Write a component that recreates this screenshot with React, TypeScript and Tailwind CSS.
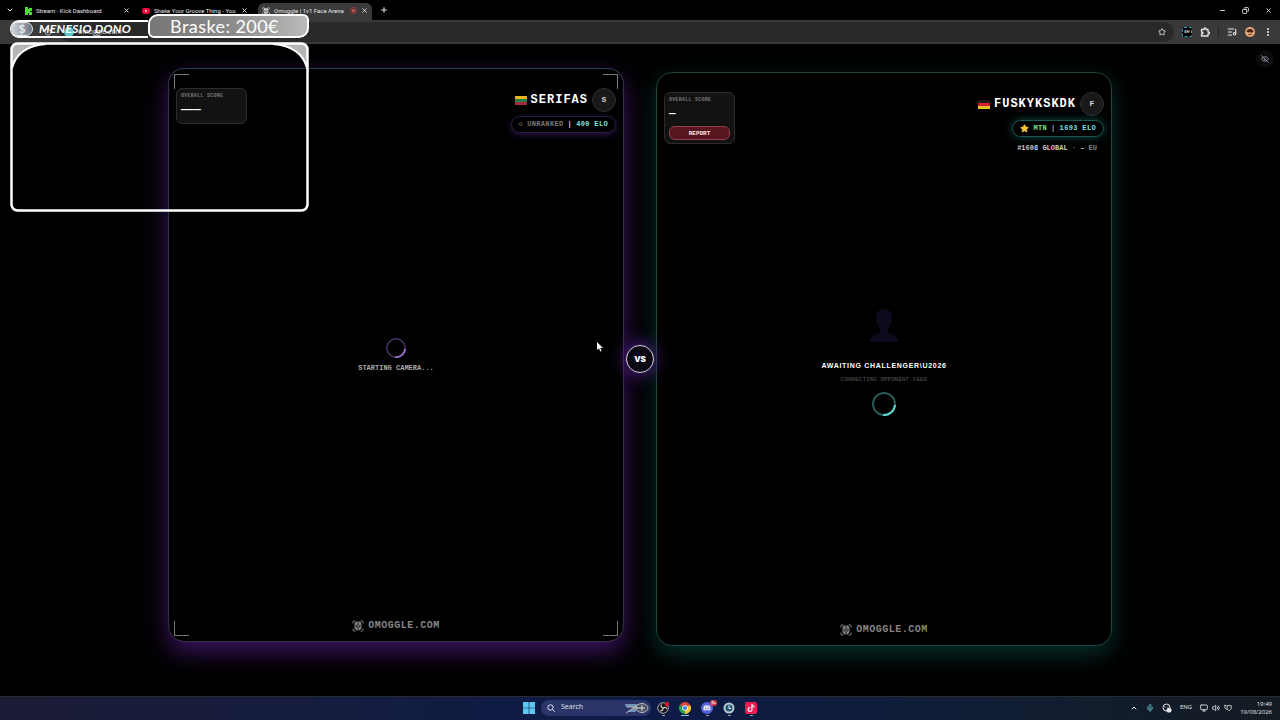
import { ReactNode } from "react";
import {
  ChevronDown,
  ChevronUp,
  Copy,
  EllipsisVertical,
  EyeOff,
  ListMusic,
  Mic,
  Minus,
  Monitor,
  Plus,
  RotateCw,
  Star,
  Volume2,
  X,
} from "lucide-react";
import { FaDiscord, FaTiktok } from "react-icons/fa";

interface TabProps {
  title: string;
  icon: ReactNode;
  active?: boolean;
}

interface PlayerHeaderProps {
  score: string;
  name: string;
  flag: string[];
  reportable?: boolean;
  children: ReactNode;
}

const FaceLogo = ({ className }: { className: string }) => (
  <svg viewBox="0 0 24 24" fill="none" stroke="currentColor" className={className}>
    <path
      d="M2 7V4q0-2 2-2h3M17 2h3q2 0 2 2v3M22 17v3q0 2-2 2h-3M7 22H4q-2 0-2-2v-3"
      strokeWidth="2"
    />
    <path
      d="M11 3C6 3 5 7 5 12s2 8 6 9zM13 3c5 0 6 4 6 9s-2 8-6 9z"
      fill="currentColor"
      strokeWidth="0.5"
    />
    <path d="M8 9v5h2M16 9v5h-2" stroke="#000" strokeWidth="1.5" />
  </svg>
);

const Tab = ({ title, icon, active }: TabProps) => (
  <div
    className={
      active
        ? "ml-0.5 flex h-[17px] w-[114px] items-center gap-1 self-end rounded-t-md bg-[#3a3a3a] pb-0.5 pl-1 pr-1"
        : "flex h-[17px] w-[118px] items-center gap-1 self-end pb-0.5 pl-1 pr-2"
    }
  >
    {icon}
    <span className="flex-1 whitespace-nowrap font-['Roboto',sans-serif] text-[6px]">{title}</span>
    {active && (
      <span className="flex size-[7px] items-center justify-center rounded-full border border-[#a33b3b]">
        <span className="size-[3px] rounded-full bg-[#e05555]" />
      </span>
    )}
    <button type="button" aria-label={`Close ${title}`}>
      <X className="size-[7px]" strokeWidth={3} />
    </button>
  </div>
);

const BrowserChrome = () => (
  <header className="font-['Open_Sans',sans-serif] text-gray-200">
    {/* Tabs */}
    <div className="flex h-5 items-center">
      <button type="button" aria-label="Search tabs" className="flex w-5 justify-center">
        <ChevronDown className="size-2" strokeWidth={3} />
      </button>
      <Tab
        title="Stream - Kick Dashboard"
        icon={
          <svg viewBox="0 0 8 8" className="size-2">
            <path d="M1 0h3v2h1V1h3v3H6v1h2v3H5V6H4v2H1z" fill="#38f01c" />
          </svg>
        }
      />
      <Tab
        title="Shake Your Groove Thing - You"
        icon={
          <svg viewBox="0 0 8 8" className="size-2">
            <rect y="1" width="8" height="6" rx="2" fill="#f0063c" />
            <path d="M3.2 2.7v2.6L5.4 4z" fill="#fff" />
          </svg>
        }
      />
      <Tab title="Omoggle | 1v1 Face Arena" icon={<FaceLogo className="size-2" />} active />
      <button type="button" aria-label="New tab" className="ml-2">
        <Plus className="size-2" strokeWidth={3} />
      </button>
      <div className="ml-auto flex gap-4 pr-2">
        <button type="button" aria-label="Minimize">
          <Minus className="size-[7px]" strokeWidth={3} />
        </button>
        <button type="button" aria-label="Restore">
          <Copy className="size-[7px] -scale-x-100" strokeWidth={3} />
        </button>
        <button type="button" aria-label="Close window">
          <X className="size-[7px]" strokeWidth={3} />
        </button>
      </div>
    </div>

    {/* Toolbar */}
    <div className="flex h-6 items-center bg-[#3a3a3a]">
      <button type="button" aria-label="Reload" className="ml-11 mr-2">
        <RotateCw className="size-2" />
      </button>
      <div className="flex h-5 flex-1 items-center gap-1 rounded-full bg-[#27292a] pl-1 pr-2">
        <span className="size-[10px] rounded-full bg-[#55c8c8]" />
        <input
          aria-label="Address"
          defaultValue="omoggle.com"
          className="min-w-0 flex-1 bg-transparent text-[7px] outline-none"
        />
        <button type="button" aria-label="Bookmark">
          <Star className="size-2" strokeWidth={2.5} />
        </button>
      </div>
      <div className="flex items-center gap-2 pl-2 pr-[7px]">
        <button
          type="button"
          aria-label="Extension"
          className="flex size-[10px] items-center justify-center rounded-xs border border-dashed border-[#2aa3b8] bg-black text-[4px] font-bold leading-none"
        >
          SH
        </button>
        <button type="button" aria-label="Extensions">
          <svg viewBox="0 0 10 10" className="size-[10px]" fill="none" stroke="currentColor">
            <path
              d="M1.500 2.500H4Q4 1 5 1t1 1.500h2V5q1.500 0 1.500 1T8 7v2H1.500V7Q3 7 3 6T1.500 5z"
              strokeWidth="1.300"
              strokeLinejoin="round"
            />
          </svg>
        </button>
        <span className="h-3 w-px bg-[#222]" />
        <button type="button" aria-label="Media">
          <ListMusic className="size-[10px]" strokeWidth={2.5} />
        </button>
        <button type="button" aria-label="Profile">
          <svg viewBox="0 0 10 10" className="size-[10px]">
            <circle cx="5" cy="5" r="5" fill="#e9a878" />
            <path d="M1.500 5q.5-3 3.500-3t3.500 3q-1 .8-3.500.4T1.500 5z" fill="#4a2214" />
            <path d="M3 7q2 1.600 4 0" stroke="#7a3a20" fill="none" />
          </svg>
        </button>
        <button type="button" aria-label="Menu">
          <EllipsisVertical className="size-[10px]" strokeWidth={3} />
        </button>
      </div>
    </div>
  </header>
);

const StreamOverlay = () => (
  <aside className="absolute left-[10px] top-[14px] w-[299px] text-white">
    <div className="flex items-end">
      <div className="flex h-[18px] w-[138px] items-center gap-1.5 rounded-l-full border-y-2 border-l border-white">
        <span className="flex h-[14px] w-[22px] shrink-0 items-center justify-center rounded-full border border-gray-200 bg-linear-to-r from-gray-300 to-gray-500 font-['Lato',sans-serif] text-[12px] font-bold leading-none text-gray-200">
          $
        </span>
        <span className="whitespace-nowrap font-['Lato',sans-serif] text-[12px] font-bold italic tracking-wide">
          MENESIO DONO
        </span>
      </div>
      <div className="flex h-6 flex-1 items-center justify-center rounded-[10px_6px_10px_6px] border-2 border-white bg-linear-to-r from-[#777] via-[#8a8a8a] to-[#bbb] pr-2 font-['Lato',sans-serif] text-[18px] leading-none tracking-wide">
        Braske: 200€
      </div>
    </div>
    <svg viewBox="0 0 299 170" className="mt-1 w-full" fill="none">
      <path d="M2 26V8q0-6 6-6h28Q8 6 2 26zM297 26V8q0-6-6-6h-28q28 4 34 24z" fill="#b5b5b5" />
      <rect x="1.500" y="1.500" width="296" height="167" rx="6" stroke="#fff" strokeWidth="2.500" />
      <path d="M2 26Q8 4 36 2M297 26Q291 4 263 2" stroke="#fff" strokeWidth="2" />
    </svg>
  </aside>
);

const Flag = ({ colors }: { colors: string[] }) => (
  <svg viewBox="0 0 12 9" className="h-[9px] w-3">
    {colors.map((color, i) => (
      <rect key={color} y={i * 3} width="12" height="3" fill={color} />
    ))}
  </svg>
);

const PlayerHeader = ({ score, name, flag, reportable, children }: PlayerHeaderProps) => (
  <div className="flex h-[88px] items-start justify-between px-[7px] pt-[19px]">
    <div className="w-[71px] rounded-md border border-[#2c2c2c] bg-[#121212] px-1 py-[3px]">
      <p className="text-[5px] font-bold leading-2 tracking-wider text-[#777]">OVERALL SCORE</p>
      <p className="h-5 text-[11px] font-black leading-[18px]">{score}</p>
      {reportable && (
        <button
          type="button"
          className="mt-0.5 flex h-[14px] w-full items-center justify-center rounded-md border border-[#94404c] bg-[#57161f] text-[6px] font-bold text-red-100"
        >
          REPORT
        </button>
      )}
    </div>
    <div className="flex flex-col items-end gap-1">
      <div className="flex items-center gap-1">
        <Flag colors={flag} />
        <h2 className="text-[12px] font-bold leading-4 tracking-[1px]">{name}</h2>
        <span className="flex size-6 items-center justify-center rounded-full border border-[#2e2e2e] bg-[#191919] text-[8px] font-bold text-gray-300">
          {name[0]}
        </span>
      </div>
      {children}
    </div>
  </div>
);

const Spinner = ({ className }: { className: string }) => (
  <svg viewBox="0 0 24 24" fill="none" stroke="currentColor" className={className}>
    <circle cx="12" cy="12" r="11" strokeWidth="2" opacity="0.4" />
    <path d="M23 13a11 11 0 0 1-12 10" strokeWidth="2" />
  </svg>
);

const Watermark = () => (
  <div className="flex h-[88px] items-end justify-center pb-[7px] text-[#858585]">
    <div className="flex items-center gap-1">
      <FaceLogo className="size-3" />
      <span className="text-[10px] font-bold leading-4 tracking-wider">OMOGGLE.COM</span>
    </div>
  </div>
);

const Arena = () => (
  <main className="relative flex flex-1 flex-col pb-[50px] pt-6 font-['Liberation_Mono',monospace]">
    <button
      type="button"
      aria-label="Hide"
      className="absolute right-1.5 top-1.5 flex size-[18px] items-center justify-center rounded-full bg-[#0b0b0b] text-gray-400"
    >
      <EyeOff className="size-2" strokeWidth={2.5} />
    </button>

    <div className="mx-auto grid w-full max-w-[944px] flex-1 grid-cols-[1fr_32px_1fr]">
      {/* You */}
      <section className="relative mb-1 flex flex-col rounded-2xl border border-[#3a2d4a] border-t-[#28404c] bg-black shadow-[0_10px_24px_#3b1460]">
        <span className="absolute left-[5px] top-[5px] size-[15px] border-l border-t border-[#777]" />
        <span className="absolute right-[5px] top-[5px] size-[15px] border-r border-t border-[#777]" />
        <span className="absolute bottom-[5px] left-[5px] size-[15px] border-b border-l border-[#777]" />
        <span className="absolute bottom-[5px] right-[5px] size-[15px] border-b border-r border-[#777]" />
        <PlayerHeader score="———" name="SERIFAS" flag={["#e8b520", "#287a4a", "#a8283c"]}>
          <p className="flex h-[17px] items-center gap-1 rounded-full border border-[#2c1d45] px-[7px] text-[7px] font-bold tracking-wider text-[#777] shadow-[0_2px_6px_#2a1048]">
            <span>◇</span>
            <span>UNRANKED</span>
            <span className="text-gray-300">|</span>
            <span className="text-[#7fe6e0]">400 ELO</span>
          </p>
        </PlayerHeader>
        <div className="flex flex-1 flex-col items-center justify-center gap-1.5">
          <Spinner className="size-5 text-[#a276e0]" />
          <p className="text-[7px] font-bold leading-2 text-[#aaa]">STARTING CAMERA...</p>
        </div>
        <Watermark />
      </section>

      <div className="relative z-10 mt-1 flex size-7 items-center justify-center self-center justify-self-center rounded-full border border-gray-300 bg-[#0b0712] font-['Inter',sans-serif] text-[8px] font-black shadow-[0_0_16px_2px_#4c1d80]">
        VS
      </div>

      {/* Opponent */}
      <section className="mt-1 flex flex-col rounded-2xl border border-[#1c4640] bg-black shadow-[0_8px_24px_#08302b]">
        <PlayerHeader
          score="—"
          name="FUSKYKSKDK"
          flag={["#1c1c1c", "#d8202c", "#f0c020"]}
          reportable
        >
          <p className="flex h-[17px] items-center gap-1 rounded-full border border-[#1b5a54] px-[7px] text-[7px] font-bold tracking-wider shadow-[0_0_8px_#0c4a42]">
            <Star className="size-[9px] fill-[#f5c53c] text-[#f5c53c]" />
            <span className="text-[#6fe38a]">MTN</span>
            <span className="text-gray-400">|</span>
            <span className="text-[#7fe0e8]">1693 ELO</span>
          </p>
          <p className="rounded-full px-[7px] text-[7px] font-bold leading-[14px] text-[#ccc]">
            #1608 GLOBAL <span className="text-[#777]">·</span> –{" "}
            <span className="text-[#888]">EU</span>
          </p>
        </PlayerHeader>
        <div className="flex flex-1 flex-col items-center justify-center pt-1.5">
          <svg viewBox="0 0 28 33" className="h-[33px] w-7" fill="#0e0a1d">
            <path d="M6 10C6 3 9 0 14 0s8 3 8 10c0 5-2 8-4 10v4c5 1 10 3 10 9H0c0-6 5-8 10-9v-4c-2-2-4-5-4-10z" />
          </svg>
          <p className="mt-[18px] font-['Liberation_Sans',sans-serif] text-[7px] font-black leading-3 tracking-widest">
            AWAITING CHALLENGER\U2026
          </p>
          <p className="text-[6px] leading-4 text-[#555]">CONNECTING OPPONENT FEED</p>
          <Spinner className="mt-1 size-6 text-[#5fd8d2]" />
        </div>
        <Watermark />
      </section>
    </div>
  </main>
);

const TaskbarApp = ({ label, open, children }: { label: string; open?: boolean; children: ReactNode }) => (
  <button type="button" aria-label={label} className="flex flex-col items-center gap-px pt-0.5">
    {children}
    <span className={open ? "h-px w-2 bg-[#7fc8e8]" : "h-px w-[3px] bg-gray-400"} />
  </button>
);

const Taskbar = () => (
  <footer className="grid h-6 grid-cols-[1fr_auto_1fr] items-center border-t border-[#2a2a33] bg-linear-to-r from-[#1b1c35] via-[#0d1b48] to-[#141c22] pb-0.5 font-['Open_Sans',sans-serif] text-gray-200">
    <div />
    <div className="flex items-center gap-1.5">
      <button type="button" aria-label="Start">
        <svg viewBox="0 0 12 12" className="size-3" fill="#5cc8f2">
          <path d="M0 0h5.700v5.700H0zM6.300 0H12v5.700H6.300zM0 6.300h5.700V12H0zM6.300 6.300H12V12H6.300z" />
        </svg>
      </button>
      <div className="flex h-4 w-[110px] items-center gap-1.5 rounded-full bg-[#2b3468] pl-1.5 pr-0.5">
        <svg viewBox="0 0 8 8" className="size-2" fill="none" stroke="currentColor">
          <circle cx="3.500" cy="3.500" r="2.700" />
          <path d="m5.500 5.500 2.200 2.200" />
        </svg>
        <input
          aria-label="Search"
          placeholder="Search"
          className="w-0 flex-1 bg-transparent text-[7px] outline-none placeholder:text-gray-200"
        />
        <svg viewBox="0 0 24 12" className="h-3 w-6" fill="none">
          <path d="M0 2h13l-2 3H1zM2 10l7-5 5 1-4 4z" fill="#6f91b8" />
          <path d="m1 11 14-9M2 5h11" stroke="#c5b8a8" />
          <ellipse cx="17" cy="6" rx="6" ry="4.500" fill="#4a5064" stroke="#bbb" />
          <path d="M11 6h9M17 3v6" stroke="#ddd" />
        </svg>
      </div>
      <div className="flex items-center gap-[10px]">
        <TaskbarApp label="OBS">
          <svg viewBox="0 0 12 12" className="size-3">
            <circle cx="6" cy="6" r="5.300" fill="#17171b" stroke="#aaa" />
            <path
              d="M6 6q-3-1-1.500-3.500M6 6q3-1.500 4 1M6 6q0 3-3 3"
              fill="none"
              stroke="#ccc"
              strokeWidth="1.200"
            />
            <circle cx="10" cy="2.200" r="2.200" fill="#d81828" />
          </svg>
        </TaskbarApp>
        <TaskbarApp label="Chrome" open>
          <svg viewBox="0 0 12 12" className="size-3">
            <path d="M6 6 .8 3A6 6 0 0 1 11.200 3z" fill="#e2453a" />
            <path d="M6 6 11.200 3A6 6 0 0 1 6 12z" fill="#f9c629" />
            <path d="M6 6v6A6 6 0 0 1 .8 3z" fill="#2f9e4f" />
            <circle cx="6" cy="6" r="2.800" fill="#fff" />
            <circle cx="6" cy="6" r="2.100" fill="#3f80ea" />
          </svg>
        </TaskbarApp>
        <TaskbarApp label="Discord">
          <span className="relative flex size-3 items-center justify-center rounded-full bg-[#5663e0]">
            <FaDiscord className="size-2" />
            <span className="absolute -right-1 -top-0.5 rounded-full bg-[#d83c50] px-px text-[4px] font-bold leading-[6px]">
              9+
            </span>
          </span>
        </TaskbarApp>
        <TaskbarApp label="Clock">
          <svg viewBox="0 0 12 12" className="size-3">
            <circle cx="6" cy="6" r="5.500" fill="#b9c8cc" />
            <circle cx="6" cy="6" r="3.500" fill="#235a78" />
            <path d="M6 3.500V6.500h2" stroke="#fff" fill="none" />
          </svg>
        </TaskbarApp>
        <TaskbarApp label="TikTok">
          <span className="flex size-3 items-center justify-center rounded-xs bg-[#ee1d52]">
            <FaTiktok className="size-2" />
          </span>
        </TaskbarApp>
      </div>
    </div>
    <div className="flex items-center justify-end pr-2">
      <ChevronUp className="mr-2 size-2" strokeWidth={3} />
      <Mic className="mr-2 size-2 text-[#5cc0c8]" strokeWidth={2.5} />
      <svg viewBox="0 0 10 10" className="mr-2 size-[10px]" fill="none" stroke="currentColor">
        <circle cx="4.500" cy="4.500" r="3.500" />
        <path d="M3 3.500v1M6 3.500v1" />
        <rect x="5" y="5.500" width="4" height="3.500" rx="1" fill="currentColor" />
      </svg>
      <span className="mr-2 text-[6px]">ENG</span>
      <Monitor className="mr-1 size-2" strokeWidth={2.5} />
      <Volume2 className="mr-1 size-2" strokeWidth={2.5} />
      <svg viewBox="0 0 10 10" className="mr-2 size-2" fill="none" stroke="currentColor">
        <path d="M4 2h5v4L6.500 8.500 4 6zM1 1v3q0 2 3 3M1 2h2" />
      </svg>
      <div className="text-right text-[6px] leading-2">
        <p>19:49</p>
        <p>19/08/2026</p>
      </div>
    </div>
  </footer>
);

const App = () => (
  <div className="relative flex min-h-screen flex-col overflow-hidden bg-black text-white">
    <BrowserChrome />
    <Arena />
    <Taskbar />
    <StreamOverlay />

    {/* Mouse pointer */}
    <svg viewBox="0 0 6 10" className="absolute left-[597px] top-[342px] h-[10px] w-1.5" fill="#fff">
      <path d="M0 0v8l2-1.700L3.200 9.500l1.300-.6L3.300 6H6z" />
    </svg>
  </div>
);

export default App;
